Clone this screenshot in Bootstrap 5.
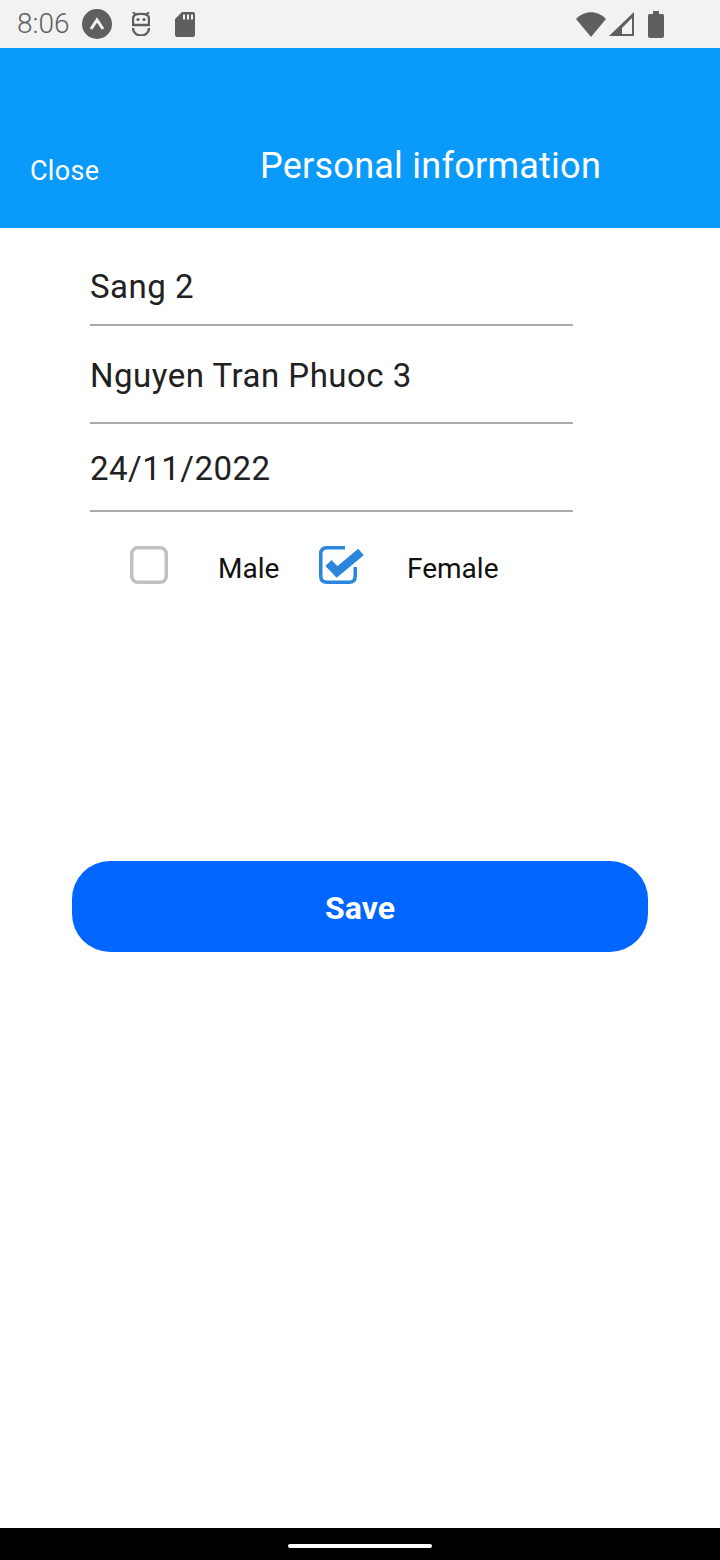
<!DOCTYPE html>
<html lang="en">
<head>
<meta charset="utf-8">
<title>Personal information</title>
<link href="https://cdn.jsdelivr.net/npm/bootstrap@5.3.0/dist/css/bootstrap.min.css" rel="stylesheet">
<style>
html,body{height:1560px;margin:0;background:#fff;font-family:Roboto,"Liberation Sans",sans-serif;overflow:hidden}
.screen{height:1560px}
.statusrow{height:48px;background:#f2f2f2;color:#5f5f5f;padding-left:17px;padding-right:56px}
.clock{font-size:28px;line-height:50px;width:53px;margin-right:12px;white-space:nowrap;font-weight:300}
.ic-a{margin-right:20px}
.ic-r{margin-right:25px}
.ic-w{margin-right:3px}
.ic-s{margin-right:14px}
.headerbar{height:180px;background:#0a9bfa;color:#fff;padding-top:115px}
.closelink{width:260px;padding-left:30px;font-size:27px;line-height:16px;letter-spacing:.3px;height:40px}
.headtitle{font-size:36px;line-height:44px;letter-spacing:.25px;margin-top:-19px;white-space:nowrap}
.fieldline{width:483px;margin-left:90px;border-bottom:2px solid #a9a9a9;font-size:33px;color:#212121;white-space:nowrap;letter-spacing:.5px;flex-shrink:0}
.f1{height:98px;padding-top:35px;line-height:48px}
.f1 span,.f2 span,.f3 span{display:block}
.f2{height:98px;padding-top:26px;line-height:48px}
.f3{height:88px;padding-top:21px;line-height:48px}
.checks{padding-left:130px;margin-top:34px;height:40px;font-size:28px;color:#111;flex-shrink:0}
.glabel{line-height:44px;margin-top:1px}
.lbl-male{margin-left:50px;width:101px}
.lbl-female{margin-left:42px}
.savebtn{display:block;width:576px;height:91px;margin:275px auto 0;background:#0066ff;border:0;border-radius:38px;color:#fff;font-size:32px;font-weight:700;font-family:Roboto,"Liberation Sans",sans-serif;padding:3px 0 0}
.savebtn:hover,.savebtn:focus{background:#0066ff;color:#fff}
.navstrip{height:32px;background:#000}
.pill{width:144px;height:4px;background:#fff;border-radius:2px;margin-top:16px}
</style>
</head>
<body>
<div class="screen d-flex flex-column">
  <div class="statusrow d-flex align-items-center flex-shrink-0">
    <span class="clock">8:06</span>
    <svg width="30" height="30" viewBox="0 0 30 30" class="ic-a"><circle cx="15" cy="15" r="15" fill="#5f5f5f"/><path d="M9 20 15 11l6 9" fill="none" stroke="#f2f2f2" stroke-width="3"/></svg>
    <svg width="18" height="24" viewBox="0 0 18 24" class="ic-r"><path d="M3 3C5 1.500 13 1.500 15 3Q17 4 17 7V13H1V7Q1 4 3 3Z" fill="none" stroke="#5f5f5f" stroke-width="2.400"/><path d="M1 0 4 3M17 0 14 3" stroke="#5f5f5f" stroke-width="2"/><circle cx="6" cy="7.500" r="1.600" fill="#5f5f5f"/><circle cx="12" cy="7.500" r="1.600" fill="#5f5f5f"/><path d="M1 16C1 26 17 26 17 16" fill="none" stroke="#5f5f5f" stroke-width="2.400"/></svg>
    <svg width="20" height="25" viewBox="0 0 20 25"><path d="M7 0H18Q20 0 20 2V23Q20 25 18 25H2Q0 25 0 23V7Z" fill="#5f5f5f"/><path d="M9 2.500v5M13 2.500v5M17 2.500v5" stroke="#f2f2f2" stroke-width="2"/></svg>
    <span class="flex-grow-1"></span>
    <svg width="30" height="25" viewBox="0 0 30 25" class="ic-w"><path d="M0 7C8-2 22-2 30 7L15 25Z" fill="#5f5f5f"/></svg>
    <svg width="25" height="24" viewBox="0 0 25 24" class="ic-s"><path d="M25 0V24H0Z" fill="#5f5f5f"/><path d="M13 22V16L23 6V22Z" fill="#f2f2f2"/></svg>
    <svg width="16" height="27" viewBox="0 0 16 27"><path d="M5 3V0H11V3H14Q16 3 16 5V25Q16 27 14 27H2Q0 27 0 25V5Q0 3 2 3Z" fill="#5f5f5f"/></svg>
  </div>
  <div class="headerbar d-flex flex-shrink-0">
    <div class="closelink">Close</div>
    <div class="headtitle">Personal information</div>
  </div>
  <div class="fieldline f1"><span>Sang 2</span></div>
  <div class="fieldline f2"><span>Nguyen Tran Phuoc 3</span></div>
  <div class="fieldline f3"><span>24/11/2022</span></div>
  <div class="checks d-flex">
    <svg width="38" height="38" viewBox="0 0 38 38" class="flex-shrink-0"><rect x="1.750" y="1.750" width="34.500" height="34.500" rx="6" fill="none" stroke="#c0c0c0" stroke-width="3.500"/></svg>
    <div class="glabel lbl-male">Male</div>
    <svg width="46" height="38" viewBox="0 0 46 38" class="flex-shrink-0"><path d="M26 1.750H8Q1.750 1.750 1.750 8V30Q1.750 36.250 8 36.250H30Q36.250 36.250 36.250 30V21" fill="none" stroke="#2a86dc" stroke-width="3.500"/><path d="M9.500 17 18 26 42 6" fill="none" stroke="#2a86dc" stroke-width="8.500"/></svg>
    <div class="glabel lbl-female">Female</div>
  </div>
  <button type="button" class="btn savebtn flex-shrink-0">Save</button>
  <div class="navstrip d-flex justify-content-center flex-shrink-0 mt-auto"><div class="pill"></div></div>
</div>
<script src="https://cdn.jsdelivr.net/npm/bootstrap@5.3.0/dist/js/bootstrap.bundle.min.js"></script>
</body>
</html>
